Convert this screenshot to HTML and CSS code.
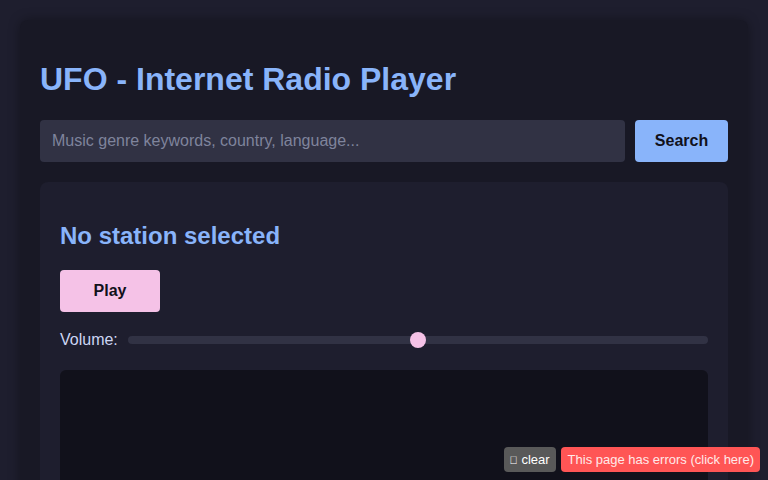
FILE: index.html
```html
<!DOCTYPE html>
<html lang="en">
<head>
<meta charset="utf-8">
<title>UFO - Internet Radio Player</title>
<link rel="stylesheet" href="styles.css">
</head>
<body>
<div class="app">
  <h1 class="title">UFO - Internet Radio Player</h1>
  <form class="search" onsubmit="return false">
    <input class="search-input" type="text" placeholder="Music genre keywords, country, language...">
    <button class="search-btn" type="submit">Search</button>
  </form>
  <section class="player">
    <h2 class="station">No station selected</h2>
    <button class="play-btn" type="button">Play</button>
    <div class="volume">
      <label class="volume-label" for="vol">Volume:</label>
      <input class="volume-range" id="vol" type="range" min="0" max="100" value="50">
    </div>
    <div class="results"></div>
  </section>
</div>
<div class="error-bar">
  <button class="err-clear" type="button"><span class="tofu">&#xE000;</span> clear</button>
  <button class="err-msg" type="button">This page has errors (click here)</button>
</div>
</body>
</html>
```
FILE: styles.css
```css
html, body {
  margin: 0;
  padding: 0;
  background: #1e1e2e;
  color: #cdd6f4;
  font-family: "Liberation Sans", Arial, sans-serif;
  font-size: 16px;
  height: 100%;
  overflow: hidden;
}
body {
  padding: 20px;
  box-sizing: border-box;
}
.app {
  background: #181825;
  border-radius: 8px;
  padding: 20px;
  box-shadow: 0 0 12px rgba(0, 0, 0, 0.35);
  min-height: 600px;
}
.title {
  color: #89b4fa;
  font-size: 32px;
  font-weight: bold;
  margin: 21.44px 0;
  line-height: 36.8px;
}
.search {
  display: flex;
  gap: 10px;
  margin: 0 0 20px;
}
.search-input {
  flex: 1;
  height: 42px;
  box-sizing: border-box;
  padding: 0 12px;
  border: none;
  border-radius: 4px;
  background: #313244;
  color: #cdd6f4;
  font-family: inherit;
  font-size: 16px;
  outline: none;
}
.search-input::placeholder {
  color: #7f849c;
}
.search-btn {
  width: 93px;
  height: 42px;
  border: none;
  border-radius: 4px;
  background: #89b4fa;
  color: #11111b;
  font-family: inherit;
  font-size: 16px;
  font-weight: bold;
}
.player {
  background: #1e1e2e;
  border-radius: 8px;
  padding: 20px;
  min-height: 400px;
}
.station {
  color: #89b4fa;
  font-size: 24px;
  font-weight: bold;
  line-height: 28px;
  margin: 20px 0;
}
.play-btn {
  display: block;
  width: 100px;
  height: 42px;
  border: none;
  border-radius: 4px;
  background: #f5c2e7;
  color: #11111b;
  font-family: inherit;
  font-size: 16px;
  font-weight: bold;
}
.volume {
  display: flex;
  align-items: center;
  gap: 10px;
  margin-top: 19px;
  height: 18px;
}
.volume-label {
  font-size: 16px;
  color: #cdd6f4;
}
.volume-range {
  flex: 1;
  -webkit-appearance: none;
  appearance: none;
  height: 8px;
  margin: 0;
  background: #313244;
  border-radius: 4px;
  outline: none;
}
.volume-range::-webkit-slider-thumb {
  -webkit-appearance: none;
  appearance: none;
  width: 16px;
  height: 16px;
  border-radius: 50%;
  background: #f5c2e7;
  border: none;
}
.results {
  margin-top: 21px;
  height: 300px;
  background: #11111b;
  border-radius: 6px;
}
.error-bar {
  position: fixed;
  right: 8px;
  bottom: 8px;
  display: flex;
  gap: 5px;
}
.err-clear, .err-msg {
  height: 25px;
  border: none;
  border-radius: 4px;
  font-family: "Liberation Sans", Arial, sans-serif;
  font-size: 13px;
}
.err-clear {
  background: #595959;
  color: #ffffff;
  padding: 0 6px;
}
.err-msg {
  background: #ff5555;
  color: #ffe9e9;
  padding: 0 6px 0 7px;
}
.tofu {
  font-size: 11px;
}
```
